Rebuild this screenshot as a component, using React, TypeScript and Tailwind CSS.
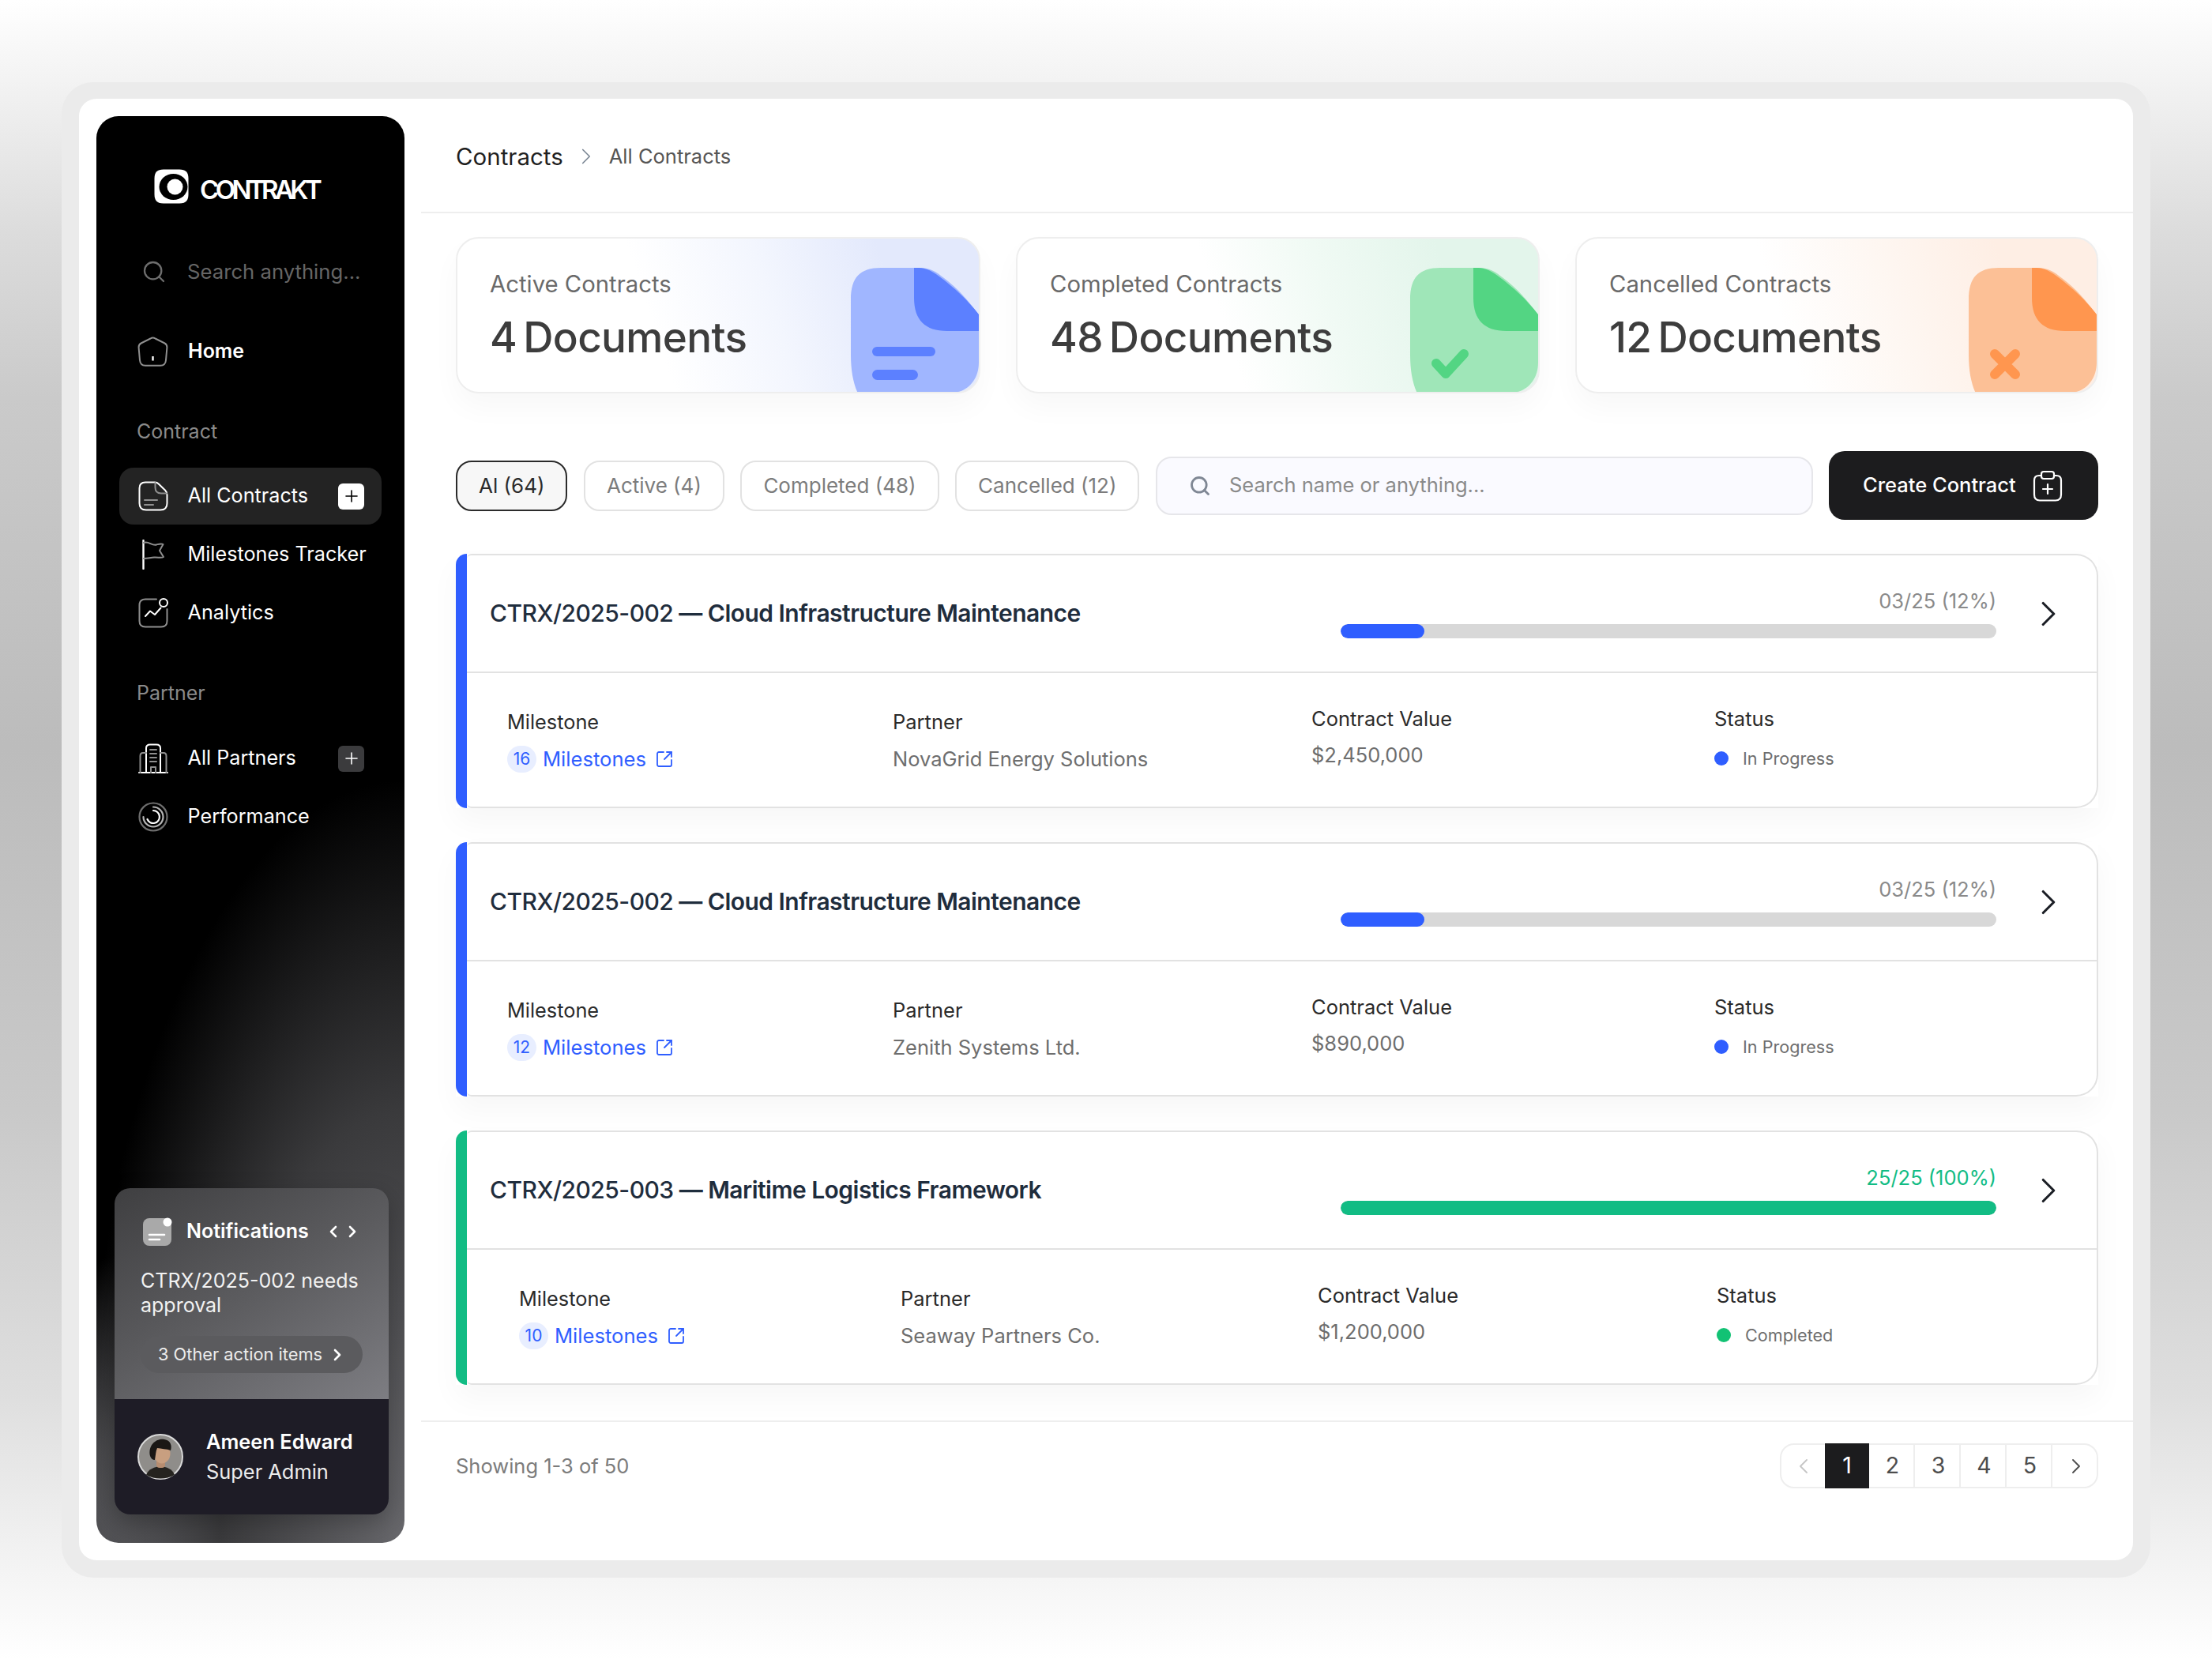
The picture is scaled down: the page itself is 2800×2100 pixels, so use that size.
import { ChevronLeft, ChevronRight, Plus, Search, SquareArrowOutUpRight } from 'lucide-react';

const GRAY = '#8f8f8f';

function Logo() {
  return (
    <svg width="44" height="44" viewBox="0 0 44 44" className="shrink-0">
      <path d="M12 0.5H32C40 0.5 43.5 4 43.5 12V32C43.5 40 40 43.5 32 43.5H12C4 43.5 0.5 40 0.5 32V12C0.5 4 4 0.5 12 0.5Z" fill="#fff" />
      <ellipse cx="24.5" cy="22.500" rx="18" ry="16.500" fill="#000" />
      <circle cx="26.500" cy="22.500" r="10" fill="#fff" />
    </svg>
  );
}

function HomeIcon() {
  return (
    <svg width="39" height="38" viewBox="0 0 39 38" fill="none" strokeLinejoin="round">
      <path d="M16.5 2.5C18.5 1.2 20.5 1.2 22.5 2.5L34.5 8.5C36.5 9.6 37.6 11.5 37.4 14L36 30C35.6 34.5 33 36.7 29 36.7H10C6 36.7 3.4 34.5 3 30L1.6 14C1.4 11.5 2.5 9.6 4.5 8.5Z" stroke={GRAY} strokeWidth="2" />
      <path d="M19.5 25V30.5" stroke="#fff" strokeWidth="2.4" />
    </svg>
  );
}

function DocIcon() {
  return (
    <svg width="38" height="38" viewBox="0 0 38 38" fill="none" strokeLinecap="round" strokeLinejoin="round">
      <path d="M9 1.5H21C23 1.5 24.5 2.2 26 3.7L34 11.5C35.8 13.3 36.5 15 36.5 17.5V28C36.5 33.5 33.5 36.5 28 36.5H10C4.5 36.5 1.5 33.5 1.5 28V9C1.5 4 4 1.5 9 1.5Z" stroke="#fff" strokeWidth="2" />
      <path d="M21.5 2V8C21.5 13 24 15.5 29 15.5H36" stroke={GRAY} strokeWidth="2" />
      <path d="M8 24H24M8 30H19" stroke={GRAY} strokeWidth="2" />
    </svg>
  );
}

function FlagIcon() {
  return (
    <svg width="38" height="38" viewBox="0 0 38 38" fill="none" strokeLinecap="round" strokeLinejoin="round">
      <path d="M6.5 1V37" stroke="#fff" strokeWidth="2.4" />
      <path d="M7 4C13 1.5 17 8 23 6.5C26 5.7 29 4.5 31.5 6L27 14L32 22C29 24 25 22 20 22.5C15 23 11 24 7 24" stroke={GRAY} strokeWidth="2" />
    </svg>
  );
}

function ChartIcon() {
  return (
    <svg width="38" height="38" viewBox="0 0 38 38" fill="none" strokeLinecap="round" strokeLinejoin="round">
      <path d="M23 1.5H9C4 1.5 1.5 4 1.5 9V29C1.5 34 4 36.5 9 36.5H29C34 36.5 36.5 34 36.5 29V14" stroke={GRAY} strokeWidth="2" />
      <circle cx="32" cy="6" r="5" stroke="#fff" strokeWidth="2" />
      <path d="M9 23L15 16.5L21 21L28.5 12.5" stroke="#fff" strokeWidth="2" />
    </svg>
  );
}

function BuildingIcon() {
  return (
    <svg width="38" height="38" viewBox="0 0 38 38" fill="none" strokeLinecap="round" strokeLinejoin="round">
      <path d="M1 37H37" stroke="#fff" strokeWidth="2" />
      <path d="M10 37V6C10 3 12 1.500 15 1.500H23C26 1.500 28 3 28 6V37" stroke="#fff" strokeWidth="2" />
      <path d="M10 12H6C3.500 12 2.500 14 2.500 16V37M28 12H32C34.500 12 35.500 14 35.500 16V37" stroke={GRAY} strokeWidth="2" />
      <path d="M15 8H23M15 13H23M15 18H23M15 23H23M16 37V30H22V37" stroke={GRAY} strokeWidth="2" />
    </svg>
  );
}

function RingsIcon() {
  return (
    <svg width="38" height="38" viewBox="0 0 38 38" fill="none" strokeLinecap="round">
      <circle cx="19" cy="19" r="17.500" stroke="#6f6f6f" strokeWidth="2.200" />
      <path d="M19 6.500A12.500 12.500 0 1 1 6.500 19" stroke="#b5b5b5" strokeWidth="2.200" />
      <path d="M19 11A8 8 0 1 1 11.500 22" stroke="#fff" strokeWidth="2.200" />
    </svg>
  );
}

function NoticeIcon() {
  return (
    <svg width="37" height="36" viewBox="0 0 37 36" fill="none" className="ml-[3px] shrink-0">
      <rect x="0" y="1" width="36" height="35" rx="8" fill="#a9a9a9" />
      <path d="M8 22H27" stroke="#fff" strokeWidth="2.600" strokeLinecap="round" />
      <path d="M8 28H21" stroke="#fff" strokeWidth="2.600" strokeLinecap="round" />
      <circle cx="31" cy="6" r="5.500" fill="#fff" />
    </svg>
  );
}

function NewContractIcon() {
  return (
    <svg width="38" height="40" viewBox="0 0 38 40" fill="none" stroke="#fff" strokeWidth="2.200" strokeLinecap="round" strokeLinejoin="round" className="ml-[21px] shrink-0">
      <path d="M11 7H8C4 7 2 9 2 13V31C2 36 4.500 38.500 9 38.500H29C33.500 38.500 36 36 36 31V13C36 9 34 7 30 7H27" />
      <rect x="11" y="2" width="16" height="9" rx="3" />
      <path d="M19 18V30M13 24H25" />
    </svg>
  );
}

function Avatar() {
  return (
    <svg width="58" height="58" viewBox="0 0 58 58" className="shrink-0">
      <circle cx="29" cy="29" r="28" fill="#8f8d8a" stroke="#d9d9d9" strokeWidth="2" />
      <path d="M11 52C14 44 22 42 29 41C37 42 44 44 47 52C36 58 22 58 11 52Z" fill="#25231f" />
      <rect x="24" y="32" width="11" height="11" rx="4" fill="#b78d70" />
      <ellipse cx="31" cy="25" rx="10.500" ry="12.500" fill="#c89f80" />
      <path d="M16 28C13 14 24 5 34 7C42 8 44 15 42 21C37 19 30 19 25 18C23 22 23 28 22 33C19 33 17 31 16 28Z" fill="#1a1715" />
    </svg>
  );
}

function StatDoc({ body, fold, children }: { body: string; fold: string; children: React.ReactNode }) {
  return (
    <svg width="162" height="159" viewBox="0 0 162 159" className="mt-[37px] shrink-0 self-start">
      <path d="M38 0H88C100 0 108 5 118 13C135 26 150 42 162 60V120C162 143 146 159 124 159H9C3 146 0 130 0 110V40C0 12 12 0 38 0Z" fill={body} />
      <path d="M80 0H86C96 0 104 5 112 11C131 25 148 41 162 59V80H122C94 80 80 66 80 38Z" fill={fold} />
      {children}
    </svg>
  );
}

type StatCard = {
  title: string;
  value: string;
  bg: string;
  icon: React.ReactNode;
};

const stats: StatCard[] = [
  {
    title: 'Active Contracts',
    value: '4 Documents',
    bg: 'bg-[linear-gradient(72deg,#ffffff_38%,#f3f6fe_60%,#e3e9fc_82%)]',
    icon: (
      <StatDoc body="#a0b6ff" fold="#5c80ff">
        <rect x="27" y="100" width="80" height="12" rx="6" fill="#5c80ff" />
        <rect x="27" y="129" width="58" height="13" rx="6.500" fill="#5c80ff" />
      </StatDoc>
    ),
  },
  {
    title: 'Completed Contracts',
    value: '48 Documents',
    bg: 'bg-[linear-gradient(72deg,#ffffff_40%,#f0faf4_60%,#e3f5eb_82%)]',
    icon: (
      <StatDoc body="#9fe6b8" fold="#53d583">
        <path d="M33 121L45 134L68 109" fill="none" stroke="#53d583" strokeWidth="12" strokeLinecap="round" strokeLinejoin="round" />
      </StatDoc>
    ),
  },
  {
    title: 'Cancelled Contracts',
    value: '12 Documents',
    bg: 'bg-[linear-gradient(72deg,#ffffff_40%,#fef7f2_60%,#feeee4_82%)]',
    icon: (
      <StatDoc body="#fcc096" fold="#ff964f">
        <path d="M33 109L59 135M59 109L33 135" fill="none" stroke="#ff964f" strokeWidth="12" strokeLinecap="round" />
      </StatDoc>
    ),
  },
];

const tabs = ['Al (64)', 'Active (4)', 'Completed (48)', 'Cancelled (12)'];

type Contract = {
  code: string;
  name: string;
  done: boolean;
  progress: string;
  pct: number;
  count: number;
  partner: string;
  amount: string;
  status: string;
  grid: string;
};

const contracts: Contract[] = [
  {
    code: 'CTRX/2025-002',
    name: 'Cloud Infrastructure Maintenance',
    done: false,
    progress: '03/25 (12%)',
    pct: 12.8,
    count: 16,
    partner: 'NovaGrid Energy Solutions',
    amount: '$2,450,000',
    status: 'In Progress',
    grid: 'pl-[51px] grid-cols-[488px_530px_510px_1fr]',
  },
  {
    code: 'CTRX/2025-002',
    name: 'Cloud Infrastructure Maintenance',
    done: false,
    progress: '03/25 (12%)',
    pct: 12.8,
    count: 12,
    partner: 'Zenith Systems Ltd.',
    amount: '$890,000',
    status: 'In Progress',
    grid: 'pl-[51px] grid-cols-[488px_530px_510px_1fr]',
  },
  {
    code: 'CTRX/2025-003',
    name: 'Maritime Logistics Framework',
    done: true,
    progress: '25/25 (100%)',
    pct: 100,
    count: 10,
    partner: 'Seaway Partners Co.',
    amount: '$1,200,000',
    status: 'Completed',
    grid: 'pl-[66px] grid-cols-[483px_528px_505px_1fr]',
  },
];

function NavRow({ icon, label, active, add }: { icon: React.ReactNode; label: string; active?: boolean; add?: 'light' | 'dark' }) {
  return (
    <div className={`flex h-[72px] items-center rounded-[18px] pl-[24px] pr-[22px] ${active ? 'bg-[#232323]' : ''}`}>
      <span className="w-[62.500px] shrink-0">{icon}</span>
      <span className="flex-1 whitespace-nowrap text-[25.200px] text-white">{label}</span>
      {add === 'light' && (
        <span className="flex h-[33px] w-[33px] items-center justify-center rounded-[6px] bg-white text-black">
          <Plus size={24} strokeWidth={1.6} />
        </span>
      )}
      {add === 'dark' && (
        <span className="flex h-[33px] w-[33px] items-center justify-center rounded-[6px] bg-[#3b3b3d] text-white">
          <Plus size={24} strokeWidth={1.6} />
        </span>
      )}
    </div>
  );
}

function Sidebar() {
  return (
    <aside className="flex w-[390px] shrink-0 flex-col overflow-hidden rounded-[28px] bg-[radial-gradient(ellipse_450px_1050px_at_100%_100%,#68686c_0%,#3a3a3c_52%,transparent_92%),radial-gradient(ellipse_520px_380px_at_45%_100%,#75757a_0%,#4a4a4d_45%,transparent_100%),linear-gradient(#000,#000)] pt-[67px]">
      <div className="flex h-[44px] items-center pl-[73px]">
        <Logo />
        <span className="ml-[14px] mt-[9px] text-[33px] font-semibold tracking-[-0.14em] text-white">CONTRAKT</span>
      </div>
      <div className="mt-[71px] flex h-[30px] items-center pl-[57px]">
        <Search size={32} strokeWidth={1.7} className="w-[58px] shrink-0 pr-[26px] text-[#6e6e6e]" />
        <span className="whitespace-nowrap text-[25.700px] text-[#666666]">Search anything...</span>
      </div>
      <div className="mt-[67px] flex h-[38px] items-center pl-[52px]">
        <span className="w-[64px] shrink-0"><HomeIcon /></span>
        <span className="text-[25px] font-semibold text-white">Home</span>
      </div>
      <div className="mt-[67px] h-[30px] pl-[51px] text-[25px] leading-[30px] text-[#8a8a8a]">Contract</div>
      <div className="mx-[29px] mt-[31px] flex flex-col gap-[2px]">
        <NavRow icon={<DocIcon />} label="All Contracts" active add="light" />
        <NavRow icon={<FlagIcon />} label="Milestones Tracker" />
        <NavRow icon={<ChartIcon />} label="Analytics" />
      </div>
      <div className="mt-[50px] h-[30px] pl-[51px] text-[25px] leading-[30px] text-[#8a8a8a]">Partner</div>
      <div className="mx-[29px] mt-[32px] flex flex-col gap-[2px]">
        <NavRow icon={<BuildingIcon />} label="All Partners" add="dark" />
        <NavRow icon={<RingsIcon />} label="Performance" />
      </div>
      <div className="mb-[36px] ml-[23px] mr-[20px] mt-auto overflow-hidden rounded-[20px] shadow-[0_10px_30px_rgba(0,0,0,0.25)]">
        <div className="h-[267px] bg-[linear-gradient(150deg,#3f3f41_0%,#5c5c5f_50%,#7d7d82_100%)] px-[33px] pt-[37px]">
          <div className="flex h-[36px] items-center">
            <NoticeIcon />
            <span className="ml-[18px] flex-1 text-[25px] font-semibold text-white">Notifications</span>
            <ChevronLeft size={24} strokeWidth={2.6} className="text-white" />
            <ChevronRight size={24} strokeWidth={2.6} className="mr-[1px] text-white" />
          </div>
          <p className="mt-[29px] text-[25px] leading-[31px] text-[#f2f2f2]">CTRX/2025-002 needs approval</p>
          <div className="mt-[23px] flex h-[47px] w-[281px] items-center rounded-full bg-[#5b5b5e] pl-[22px] text-[21.800px] text-[#ececec]">
            3 Other action items
            <ChevronRight size={24} strokeWidth={2.6} className="ml-[7px] text-white" />
          </div>
        </div>
        <div className="flex h-[146px] items-center bg-[#1e1c26] pl-[29px]">
          <Avatar />
          <div className="ml-[29px] text-[25.400px] leading-[38px] text-[#ececec]">
            <div className="font-semibold text-white">Ameen Edward</div>
            <div>Super Admin</div>
          </div>
        </div>
      </div>
    </aside>
  );
}

function ContractCard({ contract }: { contract: Contract }) {
  const barColor = contract.done ? 'bg-[#12bc84]' : 'bg-[#2f5eff]';
  return (
    <div className="flex h-[322px] shadow-[0_18px_36px_rgba(0,0,0,0.035)]">
      <div className={`w-[14px] shrink-0 rounded-l-[14px] ${barColor}`} />
      <div className="flex flex-1 flex-col rounded-l-[6px] rounded-r-[28px] border-2 border-l-0 border-[#e2e2e2] bg-white">
        <div className="flex h-[149px] items-center border-b-2 border-[#e2e2e2] pl-[29px] pr-[49px]">
          <div className="flex-1 whitespace-nowrap text-[30px] font-semibold tracking-[-0.0175em] text-[#1f2d3d]">
            <span className="font-medium">{contract.code}</span> — {contract.name}
          </div>
          <div className="w-[830px]">
            <div className={`h-[30px] text-right text-[25.500px] leading-[30px] ${contract.done ? 'text-[#12bc84]' : 'text-[#8a8a8a]'}`}>{contract.progress}</div>
            <div className="mt-[14px] h-[18px] overflow-hidden rounded-full bg-[#d8d8d8]">
              <div className={`h-full rounded-full ${barColor}`} style={{ width: `${contract.pct}%` }} />
            </div>
          </div>
          <ChevronRight size={54} strokeWidth={1.400} className="ml-[39px] mr-[-15px] text-[#1c1f26]" />
        </div>
        <div className={`grid flex-1 items-start pt-[47px] ${contract.grid}`}>
          <div>
            <div className="h-[30px] text-[25.300px] leading-[30px] text-[#2a2a2a]">Milestone</div>
            <div className="mt-[15px] flex h-[34px] items-center">
              <span className="flex h-[34px] w-[37px] items-center justify-center rounded-full bg-[#e8eeff] text-[21px] text-[#2f5eff]">{contract.count}</span>
              <span className="ml-[8px] text-[25.600px] text-[#2f5eff]">Milestones</span>
              <SquareArrowOutUpRight size={24} strokeWidth={1.8} className="ml-[11px] text-[#2f5eff]" />
            </div>
          </div>
          <div>
            <div className="h-[30px] text-[25.500px] leading-[30px] text-[#2a2a2a]">Partner</div>
            <div className="mt-[15px] flex h-[34px] items-center text-[25.500px] text-[#6e6e6e]">{contract.partner}</div>
          </div>
          <div className="mt-[-4px]">
            <div className="h-[30px] text-[25.500px] leading-[30px] text-[#2a2a2a]">Contract Value</div>
            <div className="mt-[14px] flex h-[34px] items-center text-[25.500px] text-[#6e6e6e]">{contract.amount}</div>
          </div>
          <div className="mt-[-4px]">
            <div className="h-[30px] text-[25.500px] leading-[30px] text-[#2a2a2a]">Status</div>
            <div className="mt-[18px] flex h-[34px] items-center text-[21.600px] text-[#6e6e6e]">
              <span className={`mr-[18px] h-[18px] w-[18px] rounded-full ${contract.done ? 'bg-[#12c274]' : 'bg-[#2f5eff]'}`} />
              {contract.status}
            </div>
          </div>
        </div>
      </div>
    </div>
  );
}

function Pagination() {
  return (
    <div className="flex h-[57px] w-[403px] rounded-[18px] border-2 border-[#eeeeee]">
      <div className="flex w-[55px] items-center justify-center text-[#c6c6c6]">
        <ChevronLeft size={32} strokeWidth={1.400} />
      </div>
      <div className="mt-[-2px] mb-[-2px] flex w-[56px] items-center justify-center bg-[#1c1c1e] text-[28.500px] text-white">1</div>
      {[2, 3, 4, 5].map(n => (
        <div key={n} className="flex w-[58px] items-center justify-center border-r-2 border-[#eeeeee] pl-[3px] text-[28.500px] text-[#4d4d4d]">{n}</div>
      ))}
      <div className="flex flex-1 items-center justify-center pl-[3px] text-[#4d4d4d]">
        <ChevronRight size={32} strokeWidth={1.400} />
      </div>
    </div>
  );
}

export default function App() {
  return (
    <div className="flex h-[2100px] w-[2800px] items-start justify-center bg-[linear-gradient(180deg,#ffffff_0%,#dcdcdc_14%,#cacaca_24%,#bcbcbc_45%,#c9c9c9_67%,#dedede_84%,#ffffff_100%)] pt-[104px] font-['Inter',sans-serif]">
      <div className="w-[2644px] rounded-[40px] bg-[#ebebeb] p-[22px] pt-[21px]">
        <div className="flex h-[1850px] rounded-[22px] bg-white py-[22px] pl-[22px]">
          <Sidebar />
          <main className="ml-[21px] mt-[-22px] flex flex-1 flex-col">
            <div className="flex h-[145px] items-center gap-[12px] border-b-2 border-[#eeeeee] px-[44px] pt-[3px]">
              <span className="text-[29.500px] text-[#1f1f1f]">Contracts</span>
              <ChevronRight size={34} strokeWidth={1.200} className="text-[#7b8794]" />
              <span className="text-[25.500px] text-[#555555]">All Contracts</span>
            </div>
            <div className="flex flex-1 flex-col px-[44px] pt-[30px]">
              <div className="grid grid-cols-[664px_663px_1fr] gap-[45px]">
                {stats.map(stat => (
                  <div key={stat.title} className={`flex h-[198px] justify-between overflow-hidden rounded-[29px] border-2 border-[#eeeeee] shadow-[0_18px_36px_rgba(0,0,0,0.03)] ${stat.bg}`}>
                    <div className="pl-[41px] pt-[41px]">
                      <div className="text-[29.300px] leading-[34px] text-[#6a6a6a]">{stat.title}</div>
                      <div className="mt-[18px] whitespace-nowrap text-[53px] font-medium leading-[64px] tracking-[-0.012em] text-[#3d3d3d] [word-spacing:-5.5px]">{stat.value}</div>
                    </div>
                    {stat.icon}
                  </div>
                ))}
              </div>
              <div className="mt-[73px] flex h-[87px] items-center gap-[20.500px]">
                {tabs.map((tab, i) => (
                  <div key={tab} className={`flex h-[64px] items-center whitespace-nowrap rounded-[20px] border-2 px-[27px] text-[26px] ${i === 0 ? 'border-[#2b2b2b] bg-[#f7f7f7] text-[#2b2b2b]' : 'border-[#e2e2e2] bg-white text-[#7c7c7c]'}`}>
                    {tab}
                  </div>
                ))}
                <div className="flex h-[74px] flex-1 items-center rounded-[20px] border-2 border-[#e6e6ea] bg-[#fafaff] pl-[40px]">
                  <Search size={28} strokeWidth={2.400} className="text-[#7f8794]" />
                  <span className="ml-[23px] text-[25.500px] text-[#8a8a8a]">Search name or anything...</span>
                </div>
                <div className="flex h-[87px] w-[341px] items-center rounded-[20px] bg-[#1c1c1e] pl-[43px] text-[25.500px] font-medium text-white">
                  Create Contract
                  <NewContractIcon />
                </div>
              </div>
              <div className="mt-[43px] flex flex-col gap-[43px]">
                {contracts.map((c, i) => (
                  <ContractCard key={i} contract={c} />
                ))}
              </div>
            </div>
            <div className="flex h-[155px] items-start justify-between border-t-2 border-[#eeeeee] px-[44px] pt-[27px]">
              <span className="mt-[10px] text-[25.500px] text-[#7c7c7c]">Showing 1-3 of 50</span>
              <Pagination />
            </div>
          </main>
        </div>
      </div>
    </div>
  );
}
